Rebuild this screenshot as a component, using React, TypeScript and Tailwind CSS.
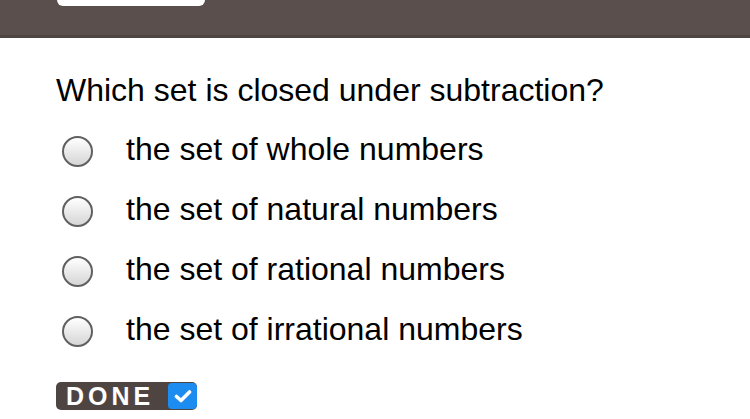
import React from "react";

const options = [
  "the set of whole numbers",
  "the set of natural numbers",
  "the set of rational numbers",
  "the set of irrational numbers",
];

function Radio() {
  return (
    <span className="block h-[31px] w-[31px] shrink-0 rounded-full border-2 border-[#606060] bg-gradient-to-b from-white to-[#d6d6d6]" />
  );
}

export default function App() {
  return (
    <div className="h-[419px] w-[750px] overflow-hidden bg-white font-['Liberation_Sans',Arial,sans-serif] text-black">
      {/* top bar */}
      <div className="h-[38px] border-b-[3px] border-[#4e4543] bg-[#5a4f4c] pl-[57px]">
        <div className="h-[6px] w-[148px] rounded-b-[7px] bg-white" />
      </div>

      <div className="pl-[56px] pt-[33px]">
        <p className="text-[32px] leading-[38px]">Which set is closed under subtraction?</p>

        <div className="mt-[12px] flex flex-col">
          {options.map((o) => (
            <label key={o} className="flex h-[60px] items-center">
              <span className="ml-[6px]">
                <Radio />
              </span>
              <span className="ml-[33px] -mt-[4px] text-[32px] leading-[38px]">{o}</span>
            </label>
          ))}
        </div>

        <button className="mt-[21px] flex h-[28px] w-[141px] items-center overflow-hidden rounded-[5px] bg-[#4e4543]">
          <span className="flex-1 pl-[10px] text-left text-[25px] font-bold leading-none tracking-[4px] text-white">DONE</span>
          <span className="flex h-[26px] w-[29px] items-center justify-center rounded-[4px] bg-[#1d8cf0]">
            <svg width="18" height="14" viewBox="0 0 18 14">
              <path d="M2.5 7.5 L7 11.5 L15.5 3" stroke="white" strokeWidth="3.6" fill="none" strokeLinecap="round" strokeLinejoin="round" />
            </svg>
          </span>
        </button>
      </div>
    </div>
  );
}
